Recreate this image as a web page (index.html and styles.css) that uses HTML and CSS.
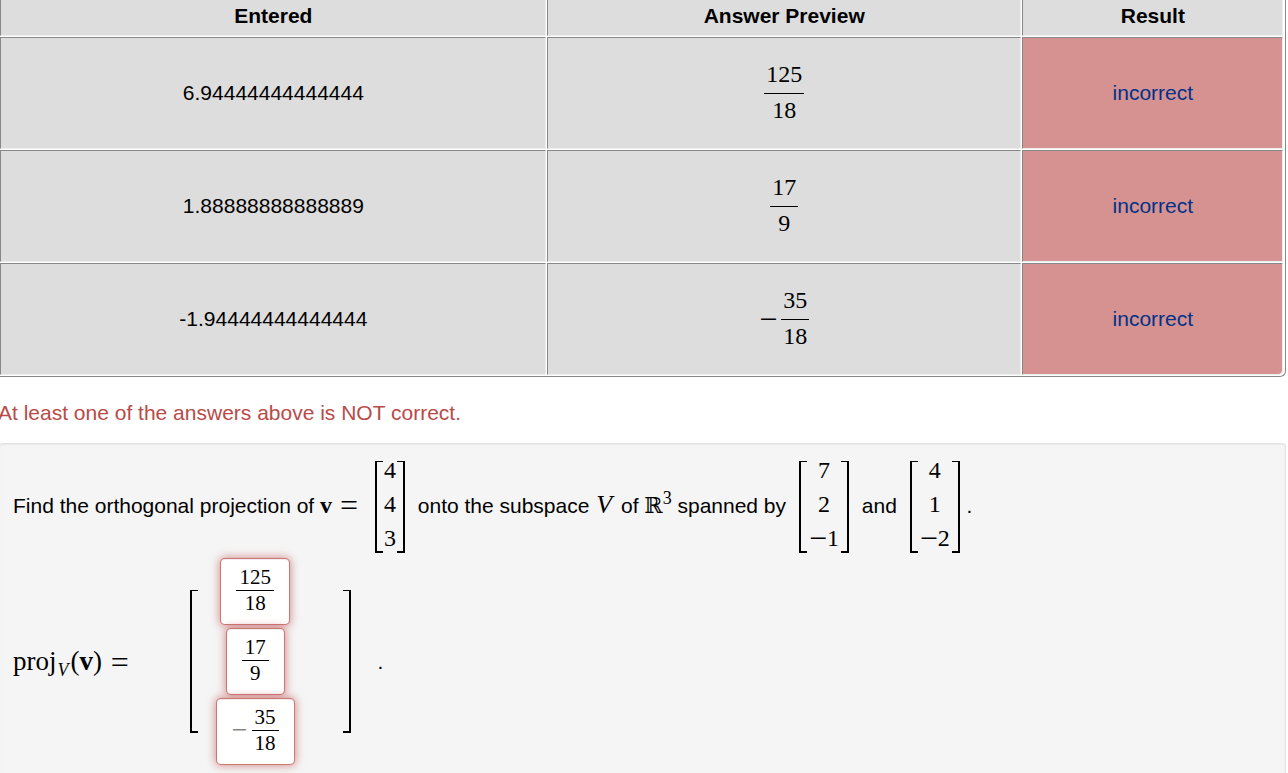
FILE: index.html
```html
<!DOCTYPE html>
<html lang="en">
  <head>
    <meta charset="UTF-8" />
    <meta name="viewport" content="width=device-width, initial-scale=1.0" />
    <title>Orthogonal Projection</title>
    <link rel="stylesheet" href="styles.css">
  </head>
  <body>
    <table class="results">
      <thead>
        <tr>
          <th class="entered">Entered</th>
          <th class="preview">Answer Preview</th>
          <th class="result">Result</th>
        </tr>
      </thead>
      <tbody>
        <tr>
          <td>6.94444444444444</td>
          <td><span class="math"><span class="frac"><span class="num">125</span><span class="den">18</span></span></span></td>
          <td class="wrong"><a href="#answer1">incorrect</a></td>
        </tr>
        <tr>
          <td>1.88888888888889</td>
          <td><span class="math"><span class="frac"><span class="num">17</span><span class="den">9</span></span></span></td>
          <td class="wrong"><a href="#answer2">incorrect</a></td>
        </tr>
        <tr>
          <td>-1.94444444444444</td>
          <td><span class="math"><span class="op">−</span><span class="frac"><span class="num">35</span><span class="den">18</span></span></span></td>
          <td class="wrong"><a href="#answer3">incorrect</a></td>
        </tr>
      </tbody>
    </table>

    <p class="message">At least one of the answers above is NOT correct.</p>

    <div class="problem">
      <div class="question">
        Find the orthogonal projection of
        <span class="var"><b>v</b> <span class="op equals">=</span></span>
        <span class="matrix"><span class="rows"><span>4</span><span>4</span><span>3</span></span></span>
        onto the subspace <i class="var space">V</i> of <span class="var"><span class="reals">ℝ</span><sup>3</sup></span> spanned by
        <span class="matrix"><span class="rows wide"><span>7</span><span>2</span><span><span class="op">−</span>1</span></span></span>
        and
        <span class="matrix last"><span class="rows wide"><span>4</span><span>1</span><span><span class="op">−</span>2</span></span></span>
        .
      </div>

      <div class="answer">
        <span class="var proj">proj<sub><i>V</i></sub>(<b>v</b>) <span class="op equals">=</span></span>
        <div class="answer-matrix">
          <div class="boxes">
            <div class="box" id="answer1" role="textbox" contenteditable="true" spellcheck="false" aria-label="answer 1 row 1"><span class="frac"><span class="num">125</span><span class="den">18</span></span></div>
            <div class="box" id="answer2" role="textbox" contenteditable="true" spellcheck="false" aria-label="answer 1 row 2"><span class="frac"><span class="num">17</span><span class="den">9</span></span></div>
            <div class="box" id="answer3" role="textbox" contenteditable="true" spellcheck="false" aria-label="answer 1 row 3"><span class="op">−</span><span class="frac"><span class="num">35</span><span class="den">18</span></span></div>
          </div>
        </div>
        <span>.</span>
      </div>
    </div>
  </body>
</html>
```
FILE: styles.css
```css
body {
  margin: 0;
  min-height: 100vh;
  display: flex;
  flex-direction: column;
  overflow: hidden;
  background-color: white;
  color: black;
  font-family: "Liberation Sans", Arial, sans-serif;
  font-size: 21px;
  line-height: 30px;
}

/* Results table */
.results {
  margin: -1px 2px 0 -1px;
  border: 0 solid #888;
  border-width: 0 1px 1px 0;
  border-radius: 0 0 6px 0;
  border-spacing: 1px;
  padding-right: 1px;
  table-layout: fixed;
}

.results th,
.results td {
  box-sizing: border-box;
  padding: 0 0 0 1px;
  border: 1px solid;
  border-color: #888 #eee #eee #888;
  background-color: #ddd;
  text-align: center;
  vertical-align: middle;
}

.results th {
  height: 36px;
  padding-bottom: 3px;
  border-top: none;
}

.results td {
  height: 112px;
}

.entered {
  width: 42.6%;
}

.preview {
  width: 37%;
}

.results .wrong {
  background-color: #d69191;
}

.results tr:last-child .wrong {
  border-bottom-right-radius: 5px;
}

.results a {
  color: #038;
  text-decoration: none;
}

/* Math */
.math,
.var,
.matrix,
.box {
  font-family: "Liberation Serif", "Times New Roman", serif;
  font-size: 24px;
}

.math {
  display: inline-flex;
  align-items: center;
  gap: 4px;
  line-height: 28px;
  vertical-align: middle;
}

.frac {
  display: inline-flex;
  flex-direction: column;
  text-align: center;
}

.num {
  padding: 0 2px 5px;
  border-bottom: 1px solid black;
}

.den {
  padding: 2px 2px 3px;
}

.op {
  font-size: 32px;
  line-height: 0;
  vertical-align: -3px;
}

.equals {
  margin: 0 4px 0 2px;
}

.var {
  line-height: 1;
}

.space {
  margin: 0 3px 0 1px;
  font-size: 26px;
}

.proj {
  font-size: 27px;
}

.reals {
  font-family: "DejaVu Serif", serif;
  font-size: 22px;
}

sup,
sub {
  font-size: 18px;
  line-height: 0;
}

sub {
  margin: 0 2px 0 1px;
}

.message {
  margin: 21px 0 15px -2px;
  color: #b94a48;
}

/* Problem body */
.problem {
  flex: 1;
  box-sizing: border-box;
  margin: 0 2px 0 -1px;
  padding: 17px 13px 6px;
  border: 1px solid #e3e3e3;
  border-bottom: none;
  border-radius: 4px 4px 0 0;
  background-color: #f5f5f5;
  box-shadow: inset 0 1px 1px rgba(0, 0, 0, 0.05);
}

.matrix {
  display: inline-flex;
  vertical-align: middle;
  margin: 0 7px;
}

.matrix.last {
  margin-right: 1px;
}

/* Square brackets */
.matrix::before,
.matrix::after,
.answer-matrix::before,
.answer-matrix::after {
  content: "";
  box-sizing: border-box;
  width: 8px;
  border: solid black;
  border-width: 1px 0 2px 2px;
}

.matrix::after,
.answer-matrix::after {
  border-width: 1px 2px 2px 0;
}

.rows {
  display: flex;
  flex-direction: column;
  box-sizing: border-box;
  height: 92px;
  padding: 0 1px 6px;
  justify-content: center;
  text-align: center;
  line-height: 34px;
}

.rows.wide {
  padding: 0 2px 6px;
}

.answer {
  display: flex;
  align-items: center;
  margin-top: 5px;
}

.answer-matrix {
  display: flex;
  align-items: center;
  margin: 0 27px 0 57px;
}

.answer-matrix::before,
.answer-matrix::after {
  height: 143px;
}

.boxes {
  display: flex;
  flex-direction: column;
  align-items: center;
  gap: 3px;
  margin: 0 48px 0 18px;
}

.box {
  display: flex;
  align-items: center;
  gap: 4px;
  box-sizing: border-box;
  height: 67px;
  padding: 0 15px 3px;
  border: 1px solid rgba(191, 84, 84, 0.8);
  border-radius: 5px;
  background-color: white;
  box-shadow: inset 0 1px 1px rgba(0, 0, 0, 0.075), 0 0 8px 1px rgba(191, 84, 84, 0.6);
  font-size: 21px;
  line-height: 24px;
}

.box .num {
  padding: 0 3px 1px;
}

.box .den {
  padding-top: 0;
  padding-bottom: 0;
}

.box .op {
  font-size: 28px;
  color: #888;
}
```
